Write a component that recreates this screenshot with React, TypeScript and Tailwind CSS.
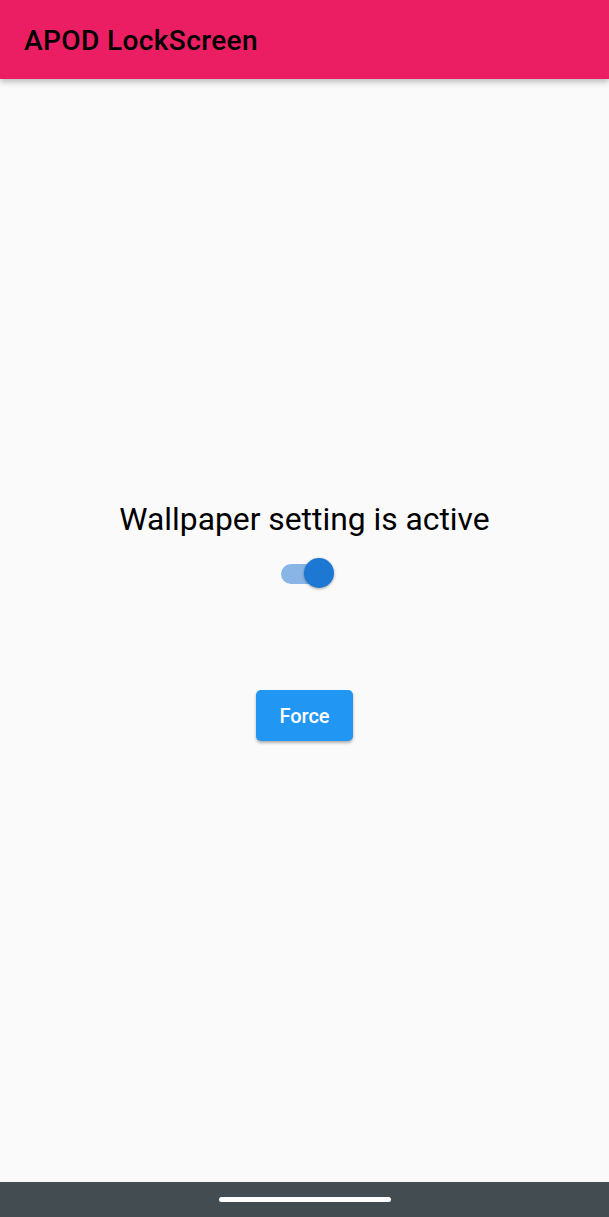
export default function App() {
  return (
    <div
      className="flex h-[1217px] w-[609px] flex-col bg-[#fafafa]"
      style={{ fontFamily: 'Roboto, "Noto Sans", sans-serif' }}
    >
      <header className="relative z-10 flex h-[79px] shrink-0 items-center bg-[#ec1e63] pl-[24px] pt-[2px] shadow-[0_3px_6px_rgba(0,0,0,0.25)]">
        <h1 className="text-[28px] font-medium leading-none tracking-[0.4px] text-black">APOD LockScreen</h1>
      </header>
      <main className="flex flex-1 flex-col items-center justify-center pb-[21px]">
        <p className="text-[31.8px] leading-[41px] text-black">Wallpaper setting is active</p>
        <div className="flex h-[68px] items-center justify-center">
          <div className="relative h-[20px] w-[48px] rounded-full bg-[#89b5e6]">
            <div className="absolute right-[-5px] top-[-6px] h-[30px] w-[30px] rounded-full bg-[#1c78d3] shadow-[0_1px_3px_rgba(0,0,0,0.35)]" />
          </div>
        </div>
        <button className="mt-[82px] flex h-[51px] w-[97px] items-center justify-center rounded-[5px] bg-[#2196f3] text-[20px] font-medium text-white shadow-[0_2px_3px_rgba(0,0,0,0.3)]">
          Force
        </button>
      </main>
      <footer className="flex h-[35px] shrink-0 items-center justify-center bg-[#434c51]">
        <div className="h-[5px] w-[172px] rounded-full bg-white" />
      </footer>
    </div>
  );
}
